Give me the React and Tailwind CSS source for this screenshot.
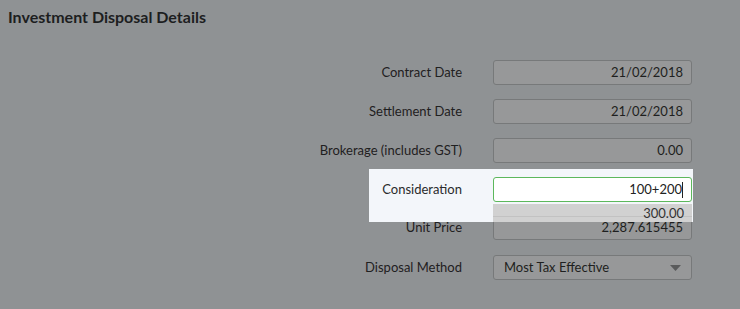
import React from "react";

const font = { fontFamily: "Lato, 'Open Sans', sans-serif" };

function Field({ label, value, select }) {
  return (
    <div className="flex items-center h-[25px]">
      <div className="w-[170px] text-right text-[13px] text-[#1f2021]">{label}</div>
      <div className="ml-[31px] w-[199px] h-[25px] rounded-[3px] border border-[#77797a] bg-[#979899] flex items-center text-[13px] text-[#1e1f20]">
        {select ? (
          <div className="flex items-center justify-between w-full pl-[10px] pr-[10px]">
            <span>{value}</span>
            <svg width="11" height="6" viewBox="0 0 11 6"><path d="M0 0h11L5.5 6z" fill="#5a5b5c" /></svg>
          </div>
        ) : (
          <span className="w-full text-right pr-[8px]">{value}</span>
        )}
      </div>
    </div>
  );
}

export default function App() {
  return (
    <div className="w-[740px] h-[309px] bg-[#8f9294] overflow-hidden" style={font}>
      <div className="pl-[8px] pt-[7px] text-[16px] font-bold text-[#1d1e1f] leading-[20px]">
        Investment Disposal Details
      </div>
      <div className="mt-[33px] ml-[292px] flex flex-col gap-[14px]">
        <Field label="Contract Date" value="21/02/2018" />
        <Field label="Settlement Date" value="21/02/2018" />
        <Field label="Brokerage (includes GST)" value="0.00" />
        <div className="relative z-10 h-[25px]">
          <div className="absolute left-[77px] top-[-8px] w-[324px] h-[53px] bg-[#f3f6fa]" />
          <div className="relative flex items-center h-[25px]">
            <div className="w-[170px] text-right text-[13px] text-[#2a2b2c]">Consideration</div>
            <div className="ml-[31px] w-[199px] h-[25px] rounded-[3px] border border-[#5cb85c] bg-white flex items-center justify-end pr-[8px] text-[13px] text-[#222]">
              <span>100+200</span>
              <span className="w-px h-[16px] bg-[#222]" />
            </div>
            <div className="absolute left-[201px] top-[27px] w-[199px] h-[18px] bg-[#d1d1d1] text-right pr-[8px] text-[13px] leading-[18px] text-[#333]">
              <div className="absolute left-0 right-0 top-[12px] h-px bg-[#c2c2c2]" />
              <span className="relative">300.00</span>
            </div>
          </div>
        </div>
        <div className="-mt-[1px] pb-[1px]">
          <Field label="Unit Price" value="2,287.615455" />
        </div>
        <Field label="Disposal Method" value="Most Tax Effective" select />
      </div>
    </div>
  );
}
